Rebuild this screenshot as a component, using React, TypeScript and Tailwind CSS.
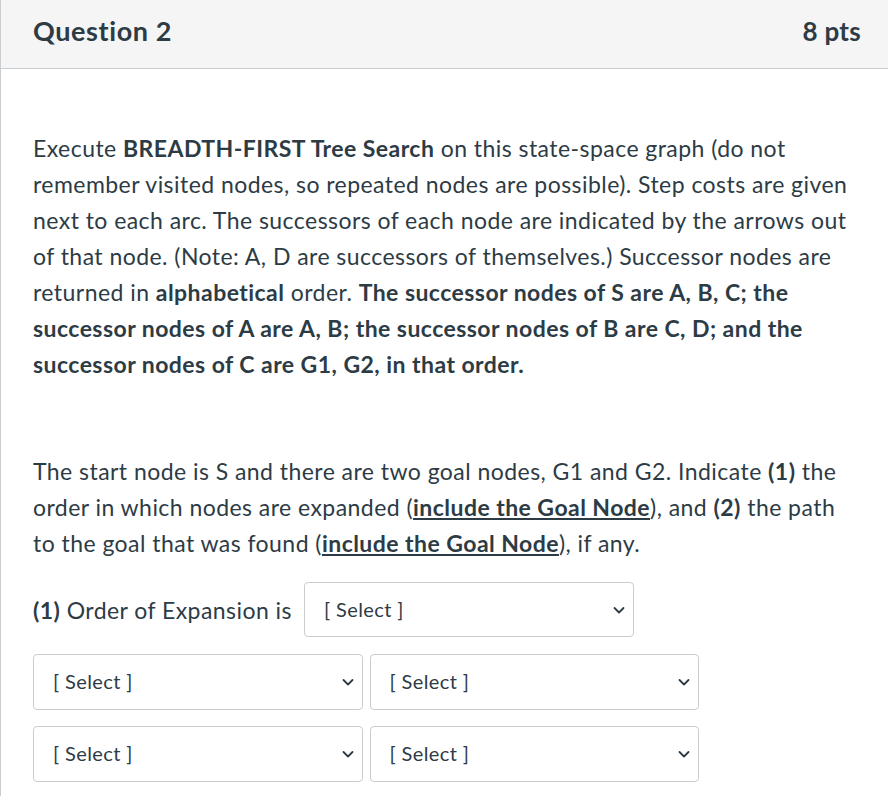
import React from 'react';

const Chevron: React.FC = () => (
  <svg width="16" height="16" viewBox="0 0 16 16" className="pointer-events-none absolute right-[7px] top-1/2 -translate-y-1/2">
    <path d="M3.5 6l4.5 4.5 4.5-4.5" fill="none" stroke="#2d3b45" strokeWidth="1.8" strokeLinecap="round" strokeLinejoin="round" />
  </svg>
);

const SelectBox: React.FC<{ className?: string }> = ({ className = '' }) => (
  <div className={`relative ${className}`}>
    <select className="h-full w-full appearance-none rounded-[4px] border border-[#c7cdd1] bg-white pb-[2px] pl-[19px] pr-8 text-[20px] tracking-[0.4px] text-[#2d3b45] outline-none">
      <option>[ Select ]</option>
    </select>
    <Chevron />
  </div>
);

const App: React.FC = () => {
  return (
    <div className="min-h-[796px] bg-white font-['Lato',sans-serif] text-[#2d3b45]">
      <div className="min-h-[796px] border-l border-[#c7cdd1]">
        <div className="flex h-[69px] items-center justify-between border-b border-[#c7cdd1] bg-[#f5f5f5] pb-[5px] pl-[32px] pr-[27px]">
          <h2 className="text-[27px] font-bold tracking-[0.6px]">Question 2</h2>
          <span className="text-[26px] font-bold tracking-[0.3px]">8 pts</span>
        </div>

        <div className="pl-[32px] pr-[30px] pt-[61px] text-[23px] leading-[36px] tracking-[0.45px]">
          <p>
            Execute <strong>BREADTH-FIRST Tree Search</strong> on this state-space graph (do not
            remember visited nodes, so repeated nodes are possible). Step costs are given next to
            each arc. The successors of each node are indicated by the arrows out of that node.
            (Note: A, D are successors of themselves.) Successor nodes are returned in{' '}
            <strong>alphabetical</strong> order.{' '}
            <strong>
              The successor nodes of S are A, B, C; the successor nodes of A are A, B; the
              successor nodes of B are C, D; and the successor nodes of C are G1, G2, in that
              order.
            </strong>
          </p>

          <p className="mt-[71px]">
            The start node is S and there are two goal nodes, G1 and G2. Indicate <strong>(1)</strong>{' '}
            the order in which nodes are expanded (<strong className="underline">include the Goal Node</strong>),
            and <strong>(2)</strong> the path to the goal that was found (
            <strong className="underline">include the Goal Node</strong>), if any.
          </p>

          <div className="mt-[21px] flex items-center gap-[12px]">
            <span>
              <strong>(1)</strong> Order of Expansion is
            </span>
            <SelectBox className="h-[55px] w-[330px]" />
          </div>

          <div className="mt-[17px] grid w-[666px] grid-cols-2 gap-x-[7px] gap-y-[16px]">
            <SelectBox className="h-[56px]" />
            <SelectBox className="h-[56px]" />
            <SelectBox className="h-[56px]" />
            <SelectBox className="h-[56px]" />
          </div>
        </div>
      </div>
    </div>
  );
};

export default App;
